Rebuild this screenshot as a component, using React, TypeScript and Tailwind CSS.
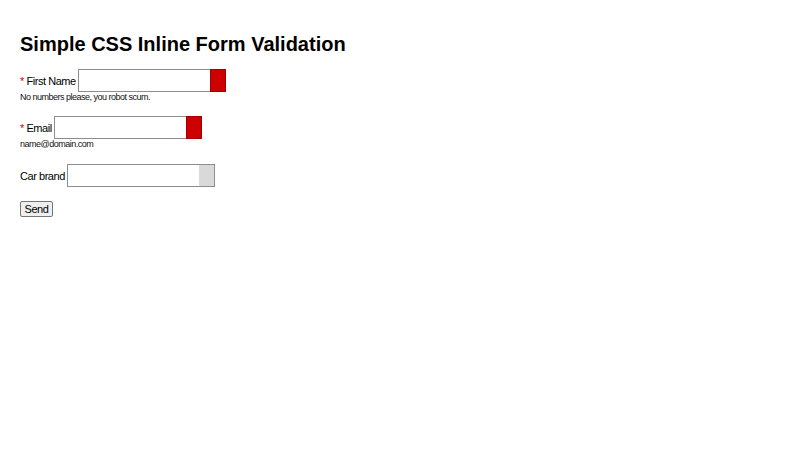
import React from "react";

const Field = ({
  label,
  required,
  hint,
  status,
  className,
}: {
  label: string;
  required?: boolean;
  hint?: string;
  status: "invalid" | "empty";
  className?: string;
}) => {
  return (
    <div className={className}>
      <div className="flex items-center h-[23px]">
        <label className="text-[11px] leading-[12px] tracking-[-0.45px] text-black mr-[2px] whitespace-pre">
          {required && <span className="text-[#cc0000]">* </span>}
          {label}
        </label>
        <div className="flex w-[148px] h-[23px] border border-[#8d8d8d] bg-white">
          <input className="flex-1 min-w-0 outline-none bg-white" />
          <div
            className={
              status === "invalid"
                ? "-my-px -mr-px w-[16px] bg-[#cc0000] border border-[#a40000]"
                : "w-[15px] bg-[#d9d9d9]"
            }
          />
        </div>
      </div>
      {hint && (
        <p className="text-[9px] leading-[10px] tracking-[-0.5px] text-[#111]">{hint}</p>
      )}
    </div>
  );
};

export default function App() {
  return (
    <div className="min-h-screen bg-white px-[20px] pt-[32px] font-['Liberation_Sans',Arial,sans-serif] text-black">
      <h1 className="text-[20px] leading-[24px] font-bold mb-[13px]">
        Simple CSS Inline Form Validation
      </h1>
      <form onSubmit={(e) => e.preventDefault()}>
        <Field
          label="First Name"
          required
          hint="No numbers please, you robot scum."
          status="invalid"
          className="mb-[14px]"
        />
        <Field
          label="Email"
          required
          hint="name@domain.com"
          status="invalid"
          className="mb-[15px]"
        />
        <Field label="Car brand" status="empty" className="mb-[14px]" />
        <button
          type="submit"
          className="block w-[33px] h-[16px] text-[11px] leading-[14px] tracking-[-0.4px] bg-[#efefef] border border-[#767676] rounded-[2px]"
        >
          Send
        </button>
      </form>
    </div>
  );
}
